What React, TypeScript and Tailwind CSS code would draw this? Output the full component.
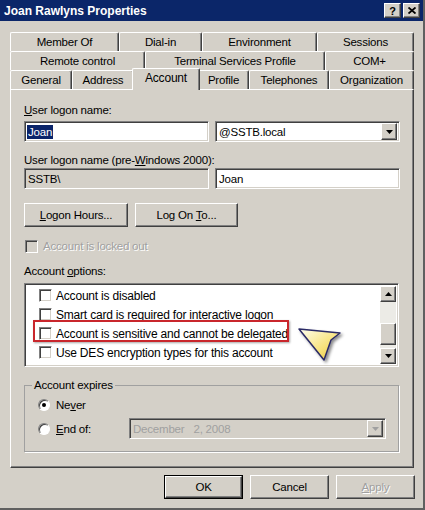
import React from "react";

const sunken =
  "border border-t-[#808080] border-l-[#808080] border-r-white border-b-white shadow-[inset_1px_1px_0_#404040,inset_-1px_-1px_0_#d4d0c8]";
const raised =
  "border border-t-white border-l-white border-r-[#404040] border-b-[#404040] shadow-[inset_-1px_-1px_0_#808080]";

function Tab({ w, label, selected }: { w: string; label: React.ReactNode; selected?: boolean }) {
  if (selected) {
    return (
      <div
        className={`${w} relative z-10 -mx-[2px] h-[22px] top-[1px] flex items-start justify-center pt-[2px] bg-[#d4d0c8] border-t border-l border-white border-r border-r-[#404040] shadow-[inset_-1px_0_0_#808080] rounded-t-[2px] text-[12px]`}
      >
        {label}
      </div>
    );
  }
  return (
    <div
      className={`${w} h-[19px] flex items-center justify-center border-t border-l border-white border-r border-r-[#404040] shadow-[inset_-1px_0_0_#808080] rounded-t-[2px]`}
    >
      {label}
    </div>
  );
}

function Check({ disabled }: { disabled?: boolean }) {
  return (
    <div
      className={`w-[13px] h-[13px] shrink-0 ${sunken} ${disabled ? "bg-[#d4d0c8]" : "bg-white"}`}
    />
  );
}

function Radio({ checked }: { checked?: boolean }) {
  return (
    <div className="w-[12px] h-[12px] shrink-0 rounded-full border border-t-[#808080] border-l-[#808080] border-r-white border-b-white bg-white shadow-[inset_1px_1px_0_#404040] flex items-center justify-center">
      {checked && <div className="w-[4px] h-[4px] rounded-full bg-black" />}
    </div>
  );
}

function DownArrow({ color = "#000" }: { color?: string }) {
  return (
    <svg width="7" height="4" viewBox="0 0 7 4">
      <path d="M0 0 H7 L3.5 4 Z" fill={color} />
    </svg>
  );
}

function UpArrow() {
  return (
    <svg width="7" height="4" viewBox="0 0 7 4">
      <path d="M0 4 H7 L3.5 0 Z" fill="#000" />
    </svg>
  );
}

export default function App() {
  return (
    <div className="relative w-[425px] h-[510px] bg-[#d4d0c8] flex flex-col border-r-2 border-b-2 border-[#606060] overflow-hidden font-['Liberation_Sans',Arial,sans-serif] text-[11.5px] tracking-[-0.2px] leading-[14px] text-black">
      {/* Title bar */}
      <div className="h-[21px] shrink-0 bg-[#0b2669] flex items-center justify-between pl-[4px] pr-[3px]">
        <span className="text-white font-bold text-[12px] tracking-normal">Joan Rawlyns Properties</span>
        <div className="flex gap-[2px]">
          <div className={`w-[17px] h-[15px] bg-[#d4d0c8] ${raised} flex items-center justify-center font-bold text-[11px]`}>?</div>
          <div className={`w-[17px] h-[15px] bg-[#d4d0c8] ${raised} flex items-center justify-center font-bold text-[11px]`}>
            <svg width="8" height="7" viewBox="0 0 8 7">
              <path d="M0.5 0.5 L7.5 6.5 M7.5 0.5 L0.5 6.5" stroke="#000" strokeWidth="1.8" />
            </svg>
          </div>
        </div>
      </div>

      {/* Body */}
      <div className="flex-1 flex flex-col pl-[10px] pr-[9px] pt-[11px]">
        {/* Tabs */}
        <div className="flex flex-col">
          <div className="flex">
            <Tab w="w-[109px]" label="Member Of" />
            <Tab w="w-[83px]" label="Dial-in" />
            <Tab w="w-[115px]" label="Environment" />
            <Tab w="w-[97px]" label="Sessions" />
          </div>
          <div className="flex">
            <Tab w="w-[135px]" label="Remote control" />
            <Tab w="w-[180px]" label="Terminal Services Profile" />
            <Tab w="w-[89px]" label="COM+" />
          </div>
          <div className="flex items-end h-[19px]">
            <Tab w="w-[62px]" label="General" />
            <Tab w="w-[62px]" label="Address" />
            <Tab w="w-[68px]" label="Account" selected />
            <Tab w="w-[51px]" label="Profile" />
            <Tab w="w-[80px]" label="Telephones" />
            <Tab w="w-[85px]" label="Organization" />
          </div>
        </div>

        {/* Panel */}
        <div className="h-[379px] w-[404px] border-t border-l border-white border-r border-b border-r-[#404040] border-b-[#404040] shadow-[inset_-1px_-1px_0_#808080] pl-[13px] pr-[12px] flex flex-col">
          <div className="mt-[13px] h-[14px]">
            <span className="underline">U</span>ser logon name:
          </div>
          <div className="mt-[4px] flex gap-[6px]">
            <div className={`w-[185px] h-[21px] bg-white ${sunken} flex items-center pl-[2px]`}>
              <span className="bg-[#0a246a] text-white px-[1px]">Joan</span>
            </div>
            <div className={`w-[185px] h-[21px] bg-white ${sunken} flex items-center justify-between pl-[3px] pr-[2px]`}>
              <span>@SSTB.local</span>
              <div className={`w-[16px] h-[17px] bg-[#d4d0c8] ${raised} flex items-center justify-center`}>
                <DownArrow />
              </div>
            </div>
          </div>
          <div className="mt-[11px] h-[14px]">
            User logon name (pre-<span className="underline">W</span>indows 2000):
          </div>
          <div className="mt-[1px] flex gap-[6px]">
            <div className={`w-[185px] h-[21px] bg-[#d4d0c8] ${sunken} flex items-center pl-[3px]`}>SSTB\</div>
            <div className={`w-[185px] h-[21px] bg-white ${sunken} flex items-center pl-[3px]`}>Joan</div>
          </div>
          <div className="mt-[14px] flex gap-[7px]">
            <div className={`w-[104px] h-[24px] ${raised} flex items-center justify-center`}>
              <span>
                <span className="underline">L</span>ogon Hours...
              </span>
            </div>
            <div className={`w-[103px] h-[24px] ${raised} flex items-center justify-center`}>
              <span>
                Log On <span className="underline">T</span>o...
              </span>
            </div>
          </div>
          <div className="mt-[12px] h-[14px] flex items-center gap-[5px] pl-[1px]">
            <Check disabled />
            <span className="text-[#a0a0a0] [text-shadow:1px_1px_0_#fff]">Account is locked out</span>
          </div>
          <div className="mt-[11px] h-[14px]">
            Account <span className="underline">o</span>ptions:
          </div>
          {/* List box */}
          <div className={`relative mt-[5px] w-[375px] h-[84px] bg-white ${sunken} p-[2px] flex`}>
            <div className="flex-1 overflow-hidden flex flex-col pl-[12px] text-[12px] tracking-[-0.2px]">
              {[
                "Account is disabled",
                "Smart card is required for interactive logon",
                "Account is sensitive and cannot be delegated",
                "Use DES encryption types for this account",
                "Do not require Kerberos preauthentication",
              ].map((t) => (
                <div key={t} className="h-[19px] shrink-0 flex items-center gap-[4px]">
                  <Check />
                  <span className="whitespace-nowrap">{t}</span>
                </div>
              ))}
            </div>
            {/* Scrollbar */}
            <div className="w-[16px] h-full flex flex-col bg-[#ecebe6]">
              <div className={`h-[16px] w-[16px] bg-[#d4d0c8] ${raised} flex items-center justify-center`}>
                <UpArrow />
              </div>
              <div className="h-[21px]" />
              <div className={`h-[22px] w-[16px] bg-[#d4d0c8] ${raised}`} />
              <div className="flex-1" />
              <div className={`h-[16px] w-[16px] bg-[#d4d0c8] ${raised} flex items-center justify-center`}>
                <DownArrow />
              </div>
            </div>
            {/* Red highlight */}
            <div className="absolute left-[8px] top-[36px] w-[256px] h-[22px] border-2 border-[#c9262c] shadow-[1px_1px_2px_rgba(0,0,0,0.35)]" />
          </div>

          {/* Account expires */}
          <fieldset className="mt-[11px] w-[375px] border border-[#a0a0a0] shadow-[1px_1px_0_#fff] pl-[13px] pr-[12px] pb-[12px]">
            <legend className="-ml-[6px] px-[2px] leading-[14px]">Account expires</legend>
            <div className="mt-[6px] h-[14px] flex items-center gap-[6px]">
              <Radio checked />
              <span>
                Ne<span className="underline">v</span>er
              </span>
            </div>
            <div className="mt-[6px] h-[21px] flex items-center">
              <div className="w-[91px] flex items-center gap-[6px]">
                <Radio />
                <span>
                  <span className="underline">E</span>nd of:
                </span>
              </div>
              <div className={`w-[257px] h-[21px] bg-[#d4d0c8] ${sunken} flex items-center justify-between pl-[3px] pr-[2px]`}>
                <span className="text-[#a0a0a0] whitespace-pre">December   2, 2008</span>
                <div className={`w-[16px] h-[17px] bg-[#d4d0c8] ${raised} flex items-center justify-center`}>
                  <DownArrow color="#a0a0a0" />
                </div>
              </div>
            </div>
          </fieldset>
        </div>

        {/* Bottom buttons */}
        <div className="mt-[7px] flex justify-end gap-[7px] -mr-[1px]">
          <div className="w-[79px] h-[24px] border border-black">
            <div className={`w-full h-full ${raised} flex items-center justify-center`}>OK</div>
          </div>
          <div className={`w-[79px] h-[24px] ${raised} flex items-center justify-center`}>Cancel</div>
          <div className={`w-[79px] h-[24px] ${raised} flex items-center justify-center`}>
            <span className="text-[#a0a0a0] [text-shadow:1px_1px_0_#fff]">
              <span className="underline">A</span>pply
            </span>
          </div>
        </div>
      </div>

      {/* Yellow pointer overlay */}
      <svg className="absolute left-[294px] top-[324px]" width="56" height="44" viewBox="0 0 56 44">
        <defs>
          <linearGradient id="yg" x1="0" y1="0" x2="1" y2="1">
            <stop offset="0" stopColor="#fffef0" />
            <stop offset="0.6" stopColor="#f7e27a" />
            <stop offset="1" stopColor="#e8c33a" />
          </linearGradient>
          <filter id="sh" x="-20%" y="-20%" width="160%" height="160%">
            <feDropShadow dx="2" dy="2" stdDeviation="1.5" floodColor="#000" floodOpacity="0.45" />
          </filter>
        </defs>
        <path
          d="M5 5 L46 9 L37 16 L30 36 Z"
          fill="url(#yg)"
          stroke="#2b2b66"
          strokeWidth="1.5"
          strokeLinejoin="round"
          filter="url(#sh)"
        />
      </svg>
    </div>
  );
}
